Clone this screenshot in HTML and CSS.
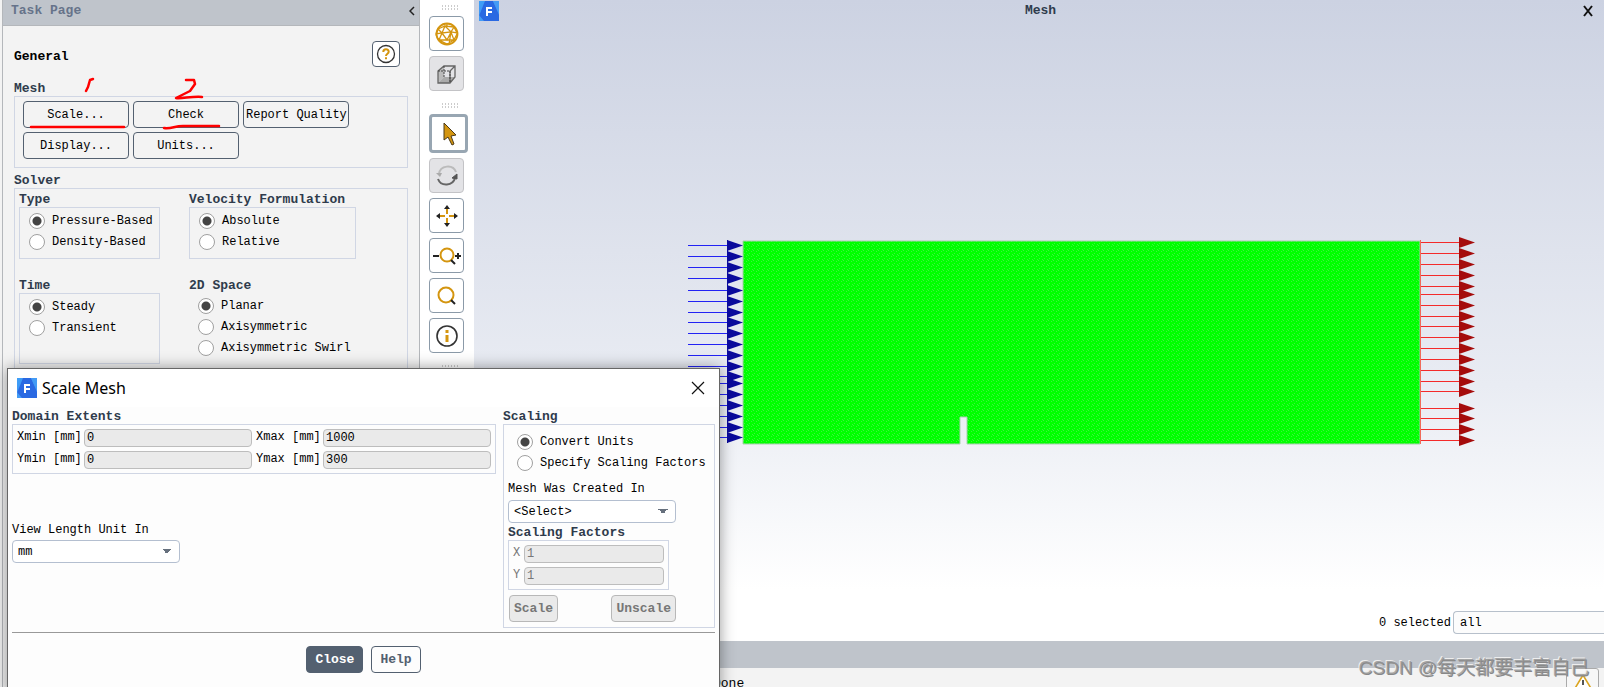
FILE: index.html
```html
<!DOCTYPE html>
<html lang="en">
<head>
	<meta charset="utf-8">
	<title>Fluent - Mesh</title>
	<link rel="stylesheet" href="styles.css">
</head>
<body>
<svg class="defs" aria-hidden="true">
	<defs>
		<linearGradient id="logoBlue" x1="0" y1="0" x2="1" y2="1">
			<stop offset="0" stop-color="#3fa0f8"/><stop offset="1" stop-color="#3b86f0"/>
		</linearGradient>
		<symbol id="logo" viewBox="0 0 20 20">
			<rect width="20" height="20" fill="url(#logoBlue)"/>
			<path d="M6 0h8l6 14v6H0v-5z" fill="#2a69e2"/>
			<path d="M0 14l5 6H0zM14 0h6v13z" fill="#439bf5"/>
			<path d="M7 6h6v2H9v2h4v2H9v3H7z" fill="#fff"/>
		</symbol>
		<symbol id="grip" viewBox="0 0 18 5">
			<path d="M1 1h17M1 4h17" stroke="#999" stroke-dasharray="1 2"/>
		</symbol>
		<g id="inlet"><path d="M0 0H40" stroke="#2222f4"/><path d="M39-5.5L55 0 39 5.5z" fill="#0a0a9c"/></g>
		<g id="outlet"><path d="M0 0H40" stroke="#f42a2a"/><path d="M39-5.5L55 0 39 5.5z" fill="#a50c0c"/></g>
		<pattern id="cells" width="5" height="5" patternUnits="userSpaceOnUse">
			<rect width="5" height="5" fill="#00ff00"/>
			<path d="M1 1h1v1H1zM3 0h1v1H3zM4 3h1v1H4zM2 4h1v1H2z" fill="#3cf43c"/>
		</pattern>
	</defs>
</svg>

<div class="app">
	<aside class="task">
		<header class="task-head"><span>Task Page</span><button class="plain" aria-label="Collapse"><svg width="6" height="10"><path d="M5 1L1 5l4 4" fill="none" stroke="#222" stroke-width="1.5"/></svg></button></header>
		<div class="task-body">
			<div class="general">
				<h1>General</h1>
				<button class="help" aria-label="Help on this page">
					<svg width="20" height="20"><circle cx="10" cy="10" r="8.5" fill="#fff" stroke="#333" stroke-width="1.3"/><path d="M7.3 8c0-3.500 5.400-3.500 5.400-.3 0 2-2.700 2-2.700 4.300M10 13.200v2" fill="none" stroke="#d4950f" stroke-width="2"/></svg>
				</button>
			</div>
			<h2>Mesh</h2>
			<div class="box mesh-box">
				<button class="btn">Scale...</button>
				<button class="btn">Check</button>
				<button class="btn">Report Quality</button>
				<button class="btn">Display...</button>
				<button class="btn">Units...</button>
				<svg class="notes" width="210" height="60" viewBox="0 0 210 60" fill="none" stroke="#f00" stroke-width="2.500" stroke-linecap="round" stroke-linejoin="round">
					<path d="M78 2l-3 1-2 7-2 4M16 50h93"/>
					<path d="M171 3h8l1 4-5 7-14 7c5 1 17-2 26-1M149 51c8 1 10-2 19-2h36"/>
				</svg>
			</div>
			<h2>Solver</h2>
			<div class="box solver">
				<fieldset>
					<legend>Type</legend>
					<div class="box radios type">
						<label><input type="radio" name="type" checked>Pressure-Based</label>
						<label><input type="radio" name="type">Density-Based</label>
					</div>
				</fieldset>
				<fieldset>
					<legend>Velocity Formulation</legend>
					<div class="box radios velocity">
						<label><input type="radio" name="velocity" checked>Absolute</label>
						<label><input type="radio" name="velocity">Relative</label>
					</div>
				</fieldset>
				<fieldset>
					<legend>Time</legend>
					<div class="box radios time">
						<label><input type="radio" name="time" checked>Steady</label>
						<label><input type="radio" name="time">Transient</label>
					</div>
				</fieldset>
				<fieldset>
					<legend>2D Space</legend>
					<div class="radios space">
						<label><input type="radio" name="space" checked>Planar</label>
						<label><input type="radio" name="space">Axisymmetric</label>
						<label><input type="radio" name="space">Axisymmetric Swirl</label>
					</div>
				</fieldset>
			</div>
		</div>
	</aside>

	<nav class="tools">
		<svg class="grip" width="18" height="5"><use href="#grip"/></svg>
		<button class="tool" aria-label="Mesh display">
			<svg width="24" height="24" fill="none" stroke="#d4950f" stroke-width="1.3"><circle cx="12" cy="12" r="10.500" stroke-width="1.8"/><path d="M3 7l7-3 9 1M10 4l-3 7-6 1 2-5 4 4 9-1 3-5-9-1 6 6 6 1-3-6M7 11l-3 7-3-5M7 11l5 7 4-8 3 8 3-6M4 18l8 0 7 0-7 4zM4 18l7 4M12 2v2M16 10l-2 12"/></svg>
		</button>
		<button class="tool off" aria-label="Bounding box">
			<svg width="24" height="24"><path d="M3 9l6-5v11l-6 6z" fill="#bbb"/><path d="M3 21l6-6h11l-5 6z" fill="#aaa"/><path d="M3 9l6-5h11v11l-5 6H3zM15 21V9l5-5" fill="none" stroke="#666" stroke-width="1.300"/><path d="M3 9h12v12M9 4v11" fill="none" stroke="#444" stroke-dasharray="2 1"/></svg>
		</button>
		<svg class="grip second" width="18" height="5"><use href="#grip"/></svg>
		<button class="tool picked" aria-label="Select">
			<svg width="24" height="26"><path d="M7 2v17l4-3 4 8 2-1-3-8 5-1z" fill="#d4950f" stroke="#4b3a18"/></svg>
		</button>
		<button class="tool off" aria-label="Rotate">
			<svg width="24" height="24" fill="none" stroke-width="2"><path d="M4 10C5 1 18 0 21 8" stroke="#bbb"/><path d="M1 9h6l-2 4z" fill="#aaa"/><path d="M3 15c3 8 15 7 17-1" stroke="#666"/><path d="M17 14l5-4v5z" fill="#555" stroke="#555" stroke-width="1"/></svg>
		</button>
		<button class="tool" aria-label="Pan">
			<svg width="24" height="24"><path d="M12 4v6M12 14v6M4 12h6M14 12h6" stroke="#d4950f" stroke-width="2"/><path d="M12 1l3 4H9zM12 23l3-4H9zM1 12l4-3v6zM23 12l-4-3v6z" fill="#222"/></svg>
		</button>
		<button class="tool" aria-label="Zoom in and out">
			<svg width="30" height="24" fill="none" stroke-width="2"><circle cx="15" cy="11" r="6.500" stroke="#d4950f"/><path d="M19 16l4 4M1 12h6M23 12h6M26 9v6" stroke="#222"/></svg>
		</button>
		<button class="tool" aria-label="Zoom to area">
			<svg width="24" height="24" fill="none" stroke-width="2"><circle cx="11" cy="11" r="7.500" stroke="#d4950f"/><path d="M16 16l4 4" stroke="#222"/></svg>
		</button>
		<button class="tool" aria-label="Information">
			<svg width="24" height="24"><circle cx="12" cy="12" r="10" fill="none" stroke="#333" stroke-width="1.6"/><path d="M12 6v3M12 11v7" stroke="#d4950f" stroke-width="3"/></svg>
		</button>
		<svg class="grip second" width="18" height="5"><use href="#grip"/></svg>
	</nav>

	<main class="view">
		<section class="graphics">
			<header class="view-head">
				<svg width="20" height="20"><use href="#logo"/></svg>
				<h2>Mesh</h2>
				<button class="plain" aria-label="Close view"><svg width="12" height="12"><path d="M2 1l8 10M10 1L2 11" stroke="#111" stroke-width="2"/></svg></button>
			</header>
			<svg class="scene" viewBox="474 22 1130 586" role="img" aria-label="Mesh with inlet and outlet arrows">
				<path d="M743 241H1420V444H967V417H960V444H743z" fill="url(#cells)" stroke="#a8cfae"/>
				<g transform="translate(688 .5)">
					<use href="#inlet" y="245"/><use href="#inlet" y="256"/><use href="#inlet" y="267"/><use href="#inlet" y="278"/>
					<use href="#inlet" y="290"/><use href="#inlet" y="301"/><use href="#inlet" y="312"/><use href="#inlet" y="322"/>
					<use href="#inlet" y="333"/><use href="#inlet" y="344"/><use href="#inlet" y="355"/><use href="#inlet" y="366"/>
					<use href="#inlet" y="376"/><use href="#inlet" y="383"/><use href="#inlet" y="394"/><use href="#inlet" y="405"/>
					<use href="#inlet" y="416"/><use href="#inlet" y="427"/><use href="#inlet" y="437"/>
				</g>
				<path d="M727.500 240V443" stroke="#0a0a9c"/>
				<g transform="translate(1420 .5)">
					<use href="#outlet" y="242"/><use href="#outlet" y="253"/><use href="#outlet" y="264"/><use href="#outlet" y="275"/>
					<use href="#outlet" y="286"/><use href="#outlet" y="294"/><use href="#outlet" y="305"/><use href="#outlet" y="316"/>
					<use href="#outlet" y="326"/><use href="#outlet" y="337"/><use href="#outlet" y="348"/><use href="#outlet" y="359"/>
					<use href="#outlet" y="370"/><use href="#outlet" y="381"/><use href="#outlet" y="391"/><use href="#outlet" y="408"/>
					<use href="#outlet" y="418"/><use href="#outlet" y="429"/><use href="#outlet" y="440"/>
				</g>
				<path d="M1420.500 240V444" stroke="#f06a5a"/>
			</svg>
			<div class="selection"><label for="selected">0 selected</label><input id="selected" value="all"></div>
		</section>
		<div class="divider"></div>
		<footer class="console"><span>Done</span>
			<button class="warn" aria-label="Warnings"><svg width="20" height="18"><path d="M10 2L1 17h18z" fill="#fff" stroke="#dba520" stroke-width="1.600"/><path d="M10 7v5M10 14v2" stroke="#555" stroke-width="2"/></svg></button>
		</footer>
	</main>
</div>

<section class="dialog" role="dialog" aria-labelledby="dialogTitle">
	<header class="dialog-head">
		<svg width="20" height="20"><use href="#logo"/></svg>
		<h2 id="dialogTitle">Scale Mesh</h2>
		<button class="plain" aria-label="Close dialog"><svg width="14" height="14"><path d="M1 1l12 12M13 1L1 13" stroke="#111" stroke-width="1.200"/></svg></button>
	</header>
	<div class="dialog-body">
		<div class="left">
			<h3>Domain Extents</h3>
			<div class="box extents">
				<label for="xmin">Xmin [mm]</label><input id="xmin" value="0" readonly>
				<label for="xmax">Xmax [mm]</label><input id="xmax" value="1000" readonly>
				<label for="ymin">Ymin [mm]</label><input id="ymin" value="0" readonly>
				<label for="ymax">Ymax [mm]</label><input id="ymax" value="300" readonly>
			</div>
			<label class="unit" for="unit">View Length Unit In</label>
			<select id="unit"><option>mm</option></select>
		</div>
		<div class="right">
			<h3>Scaling</h3>
			<div class="box scaling">
				<div class="radios">
					<label><input type="radio" name="scaling" checked>Convert Units</label>
					<label><input type="radio" name="scaling">Specify Scaling Factors</label>
				</div>
				<label class="created" for="created">Mesh Was Created In</label>
				<select id="created"><option>&lt;Select&gt;</option></select>
				<h3>Scaling Factors</h3>
				<div class="box factors">
					<label for="fx">X</label><input id="fx" value="1" disabled>
					<label for="fy">Y</label><input id="fy" value="1" disabled>
				</div>
				<div class="actions">
					<button class="btn bold" disabled>Scale</button>
					<button class="btn bold" disabled>Unscale</button>
				</div>
			</div>
		</div>
	</div>
	<footer class="dialog-foot">
		<button class="btn bold primary">Close</button>
		<button class="btn bold">Help</button>
	</footer>
</section>
<div class="watermark">CSDN @每天都要丰富自己</div>
</body>
</html>
```
FILE: styles.css
```css
* { box-sizing: border-box; }
body {
	margin: 0; background: #f3f3f3; color: #000;
	font: 12px/16px "Liberation Mono", monospace;
	height: 100vh; overflow: hidden; position: relative;
}
button, input, select { font: inherit; color: inherit; margin: 0; }
svg { display: block; flex: none; }
h1, h2, h3, legend { margin: 0; padding: 0; font-size: 13px; line-height: 14px; font-weight: bold; color: #2f3b4c; }
h1 { color: #000; }
fieldset { border: 0; margin: 0; padding: 0; min-width: 0; }
.defs { position: absolute; width: 0; height: 0; }
.plain { border: 0; background: none; padding: 0; }
.box { border: 1px solid #d0d6e4; }

.app { display: grid; grid-template-columns: 418px 54px minmax(0, 1fr); height: 100%; padding-left: 2px; }

.task { border: 1px solid #b4b7bb; border-width: 0 1px; background: #f3f3f3; }
.task-head {
	display: flex; justify-content: space-between; align-items: center;
	height: 26px; padding: 0 4px 4px 8px;
	background: #bfc4cb; border-bottom: 1px solid #b4b7bb;
	color: #66738a; font-size: 13px; font-weight: bold;
}
.task-body { padding: 15px 11px 0 11px; }
.general { display: flex; justify-content: space-between; align-items: center; height: 32px; margin-bottom: 9px; padding-right: 8px; }
.help { width: 28px; height: 26px; display: grid; place-items: center; padding: 0; border: 1px solid #536070; border-radius: 4px; background: #fff; margin-bottom: 6px; }

.btn { height: 27px; padding: 0 2px; border: 1px solid #536070; border-radius: 4px; background: transparent; white-space: nowrap; }
.bold { padding: 0 4px; font-size: 13px; font-weight: bold; color: #536070; }
.btn:disabled { border-color: #b8b8b8; background: #eaeaea; color: #777; }
.primary { background: #536070; color: #fff; }

.mesh-box { display: grid; grid-template-columns: repeat(3, 106px); align-content: start; gap: 4px; height: 72px; padding: 4px 8px; margin-bottom: 6px; position: relative; }
.notes { position: absolute; left: 0; top: -20px; pointer-events: none; }

.solver { display: grid; grid-template-columns: 141px 167px; column-gap: 29px; row-gap: 20px; padding: 4px 4px 20px; }
.radios { display: flex; flex-direction: column; }
.radios label { display: flex; align-items: center; gap: 7px; height: 21px; white-space: nowrap; }
.radios input { appearance: none; flex: none; width: 16px; height: 16px; border: 1px solid #a0a0a0; border-radius: 50%; background: #fff; }
.radios input:checked { background: radial-gradient(circle, #444 0 4px, #fff 5px); }
.type, .velocity { height: 52px; padding: 2px 9px; }
.time { height: 71px; padding: 2px 9px; }
.space { padding: 2px 9px; }

.tools { display: flex; flex-direction: column; align-items: flex-start; background: #fff; padding: 5px 0 0 9px; }
.tool { width: 35px; height: 35px; display: grid; place-items: center; padding: 0; margin-bottom: 5px; border: 1px solid #8b9aa8; border-radius: 4px; background: #fff; flex: none; }
.off { border-color: #c3c3c6; background: #e3e3e6; }
.picked { width: 39px; height: 39px; border: 3px solid #98a6b2; }
.grip { margin: 0 0 6px 12px; }
.second { margin: 7px 0 6px 12px; }

.view { display: flex; flex-direction: column; min-width: 0; }
.graphics { flex: 1; min-height: 0; display: flex; flex-direction: column; background: linear-gradient(#ccd2e2, #e9ecf3 60%, #fff 92%); }
.view-head { display: flex; justify-content: space-between; align-items: center; height: 22px; padding: 0 10px 0 5px; }
.scene { width: 100%; height: auto; flex: 0 1 auto; min-height: 0; }
.selection { display: flex; align-items: center; justify-content: flex-end; gap: 2px; margin-top: auto; padding-bottom: 7px; }
.selection input { width: 151px; height: 23px; padding: 0 6px; border: 1px solid #b7c0cb; border-right: 0; border-radius: 4px 0 0 4px; background: #fcfcfc; }
.divider { height: 27px; background: #bfc4cb; }
.console { display: flex; justify-content: space-between; height: 19px; padding: 0 5px 0 239px; background: #f3f3f3; overflow: hidden; }
.console span { padding-top: 8px; font-size: 13px; }
.warn { width: 33px; height: 28px; display: grid; place-items: center; padding: 0; border: 1px solid #aaa; background: #f7f7f7; border-radius: 3px; flex: none; }

.dialog {
	position: absolute; left: 7px; top: 368px; bottom: -8px; width: 713px;
	display: flex; flex-direction: column;
	background: #fdfdfd; border: 1px solid #666;
	box-shadow: 0 0 14px rgba(0, 0, 0, .4);
}
.dialog-head { display: flex; align-items: center; gap: 5px; height: 38px; padding: 0 14px 0 9px; background: #fff; }
.dialog-head h2 { flex: 1; font: 16px/20px "Noto Sans", sans-serif; color: #000; }
.dialog-body { display: flex; justify-content: space-between; margin: 0 4px; padding: 3px 0 4px; border-bottom: 1px solid #999; }
.dialog label { white-space: nowrap; }
.dialog input:not([type]) { width: 100%; min-width: 0; height: 18px; padding: 0 2px; border: 1px solid #bdbdbd; border-radius: 4px; background: #eaeaea; }
.left { width: 484px; }
.extents { display: grid; grid-template-columns: 63px 1fr 63px 1fr; gap: 4px; padding: 4px; height: 50px; }
.extents input { margin-left: 4px; }
.dialog .extents { column-gap: 4px; }
.unit { display: block; margin: 48px 0 2px; }
select {
	appearance: none; width: 168px; height: 23px; padding: 0 5px; border: 1px solid #b4bfd0; border-radius: 4px;
	background: linear-gradient(to bottom left, #66707d 50%, transparent 50%) right 12px center / 5px 5px no-repeat, linear-gradient(to bottom right, #66707d 50%, transparent 50%) right 7px center / 5px 5px no-repeat, #fff;
}
.right { width: 212px; }
.scaling { padding: 6px 4px 5px; }
.scaling .radios { padding-left: 9px; }
.created { display: block; margin: 8px 0 3px; }
.scaling h3 { margin-top: 3px; }
.factors { display: grid; grid-template-columns: 11px 1fr; gap: 4px 0; width: 161px; height: 50px; padding: 4px; color: #777; }
.dialog input:disabled { color: #777; }
.actions { display: flex; justify-content: space-between; width: 168px; padding: 5px 0 0 1px; }
.dialog-foot { display: flex; justify-content: center; gap: 8px; padding: 13px 0; }
.dialog-foot .btn { padding: 0 8px; }

.extents input { margin-left: 0; }

.watermark {
	position: absolute; right: 15px; bottom: 5px;
	font: 19px/28px "Liberation Sans", "Noto Sans CJK SC", sans-serif;
	color: rgba(150, 150, 150, .8); text-shadow: 1px 1px 0 #888, -1px -1px 0 #eee;
}
```
